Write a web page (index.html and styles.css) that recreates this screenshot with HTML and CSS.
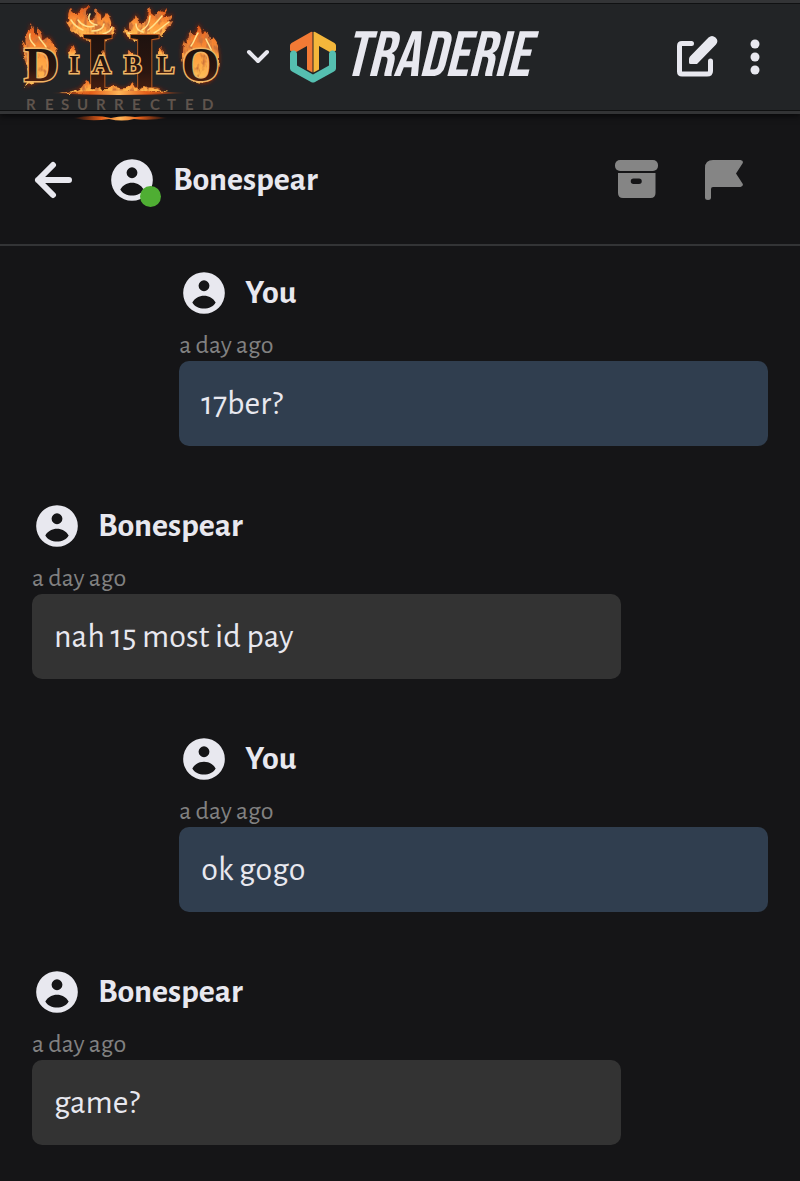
FILE: index.html
```html
<!DOCTYPE html>
<html lang="en">
<head>
    <meta charset="UTF-8">
    <meta name="viewport" content="width=device-width, initial-scale=1.0">
    <title>Bonespear - Traderie</title>
    <link rel="stylesheet" href="styles.css">
</head>
<body>
    <svg class="defs" width="0" height="0" aria-hidden="true">
        <symbol id="avatar" viewBox="0 0 24 24">
            <path fill-rule="evenodd" d="M12 2a10 10 0 1 0 0 20 10 10 0 0 0 0-20zm0 3.900a2.600 2.600 0 1 1 0 5.200 2.600 2.600 0 0 1 0-5.200zM6.400 16.500C7.600 14.400 9.700 13.300 12 13.300s4.400 1.100 5.600 3.200C16.500 18.500 14.400 19.400 12 19.400s-4.500-.9-5.600-2.900z"/>
        </symbol>
    </svg>

    <header class="topbar">
        <button class="game-btn" aria-label="Choose game">
            <svg class="game-logo" viewBox="0 0 240 130" role="img" aria-label="Diablo II Resurrected">
                <defs>
                    <filter id="glow" x="-20%" y="-20%" width="140%" height="140%"><feGaussianBlur stdDeviation="2"/></filter>
                    <filter id="soft" x="-10%" y="-10%" width="120%" height="120%"><feGaussianBlur stdDeviation="0.5"/></filter>
                    <!-- rough edges and dark streaks inside the flames -->
                    <filter id="burn" x="-10%" y="-10%" width="120%" height="120%">
                        <feTurbulence type="fractalNoise" baseFrequency="0.16 0.09" numOctaves="3" seed="4" result="noise"/>
                        <feDisplacementMap in="SourceGraphic" in2="noise" scale="6" xChannelSelector="R" yChannelSelector="G" result="shape"/>
                        <feColorMatrix in="noise" values="0 0 0 0 0.62  0 0 0 0 0.17  0 0 0 0 0.04  0 0 5 0 -2.4" result="streaks"/>
                        <feComposite in="streaks" in2="shape" operator="atop" result="fire"/>
                        <feGaussianBlur in="fire" stdDeviation="0.5"/>
                    </filter>
                    <linearGradient id="fire" x1="0" y1="0" x2="0" y2="1">
                        <stop offset="0" stop-color="#e0561a"/>
                        <stop offset="0.5" stop-color="#ff9a3c"/>
                        <stop offset="1" stop-color="#ffc65a"/>
                    </linearGradient>
                    <linearGradient id="stone" x1="0" y1="0" x2="0" y2="1">
                        <stop offset="0" stop-color="#17100e"/>
                        <stop offset="0.6" stop-color="#2b1610"/>
                        <stop offset="1" stop-color="#6b2910"/>
                    </linearGradient>
                    <linearGradient id="ember">
                        <stop offset="0" stop-color="#c8420e" stop-opacity="0"/>
                        <stop offset="0.3" stop-color="#e5601a"/>
                        <stop offset="0.5" stop-color="#ffb456"/>
                        <stop offset="0.7" stop-color="#e5601a"/>
                        <stop offset="1" stop-color="#c8420e" stop-opacity="0"/>
                    </linearGradient>
                    <g id="horn-flames">
                        <path d="M82 38C75 33 69 30 66 20c2 2 3 2 4 1-3-5-2-10 2-13-1 4 1 6 4 6 2 0 3-5 9-7 3-1 5-1 6 0-5 1-7 6-3 10 2 3 5 3 7 0 2-3 1-5-1-7 6 1 8 5 7 10 3-1 5-3 4-8 5 5 7 9 6 15 2 0 3 0 4-2 2 7-2 12-7 15-8 2-18 2-26-2z"/>
                        <path d="M128 38c-3-3-5-7-3-11 1 3 3 4 5 3-2-4-1-7 2-9 3-3 4-5 3-8 4 4 4 8 4 10 4 1 7 0 8-4 1-4-1-8 4-12-1 5 1 8 4 9 4-1 6-6 12-7-3 3-3 6-2 7 3 0 5 0 8-3-1 5-3 7-5 8 2 1 3 1 5 0-2 6-7 8-9 10-2 4-4 6-9 7-9 3-19 3-27 0z"/>
                    </g>
                    <g id="letter-flames">
                        <path d="M25 56c-3-5-4-10-1-15 0 3 1 4 3 4-1-5-1-8 1-12 2-3 3-6 2-10 4 4 3 9 6 12 2 2 3-2 1-6 5 3 6 7 6 11 3 0 4-2 5-4 5 5 9 12 8 23-1 10-6 17-14 21-7 3-12 4-18 8 4-5 5-9 5-16z"/>
                        <path d="M187 73c-6-10-6-23-3-33 1 3 2 4 4 3-1-5 0-9 4-12-1 4 1 5 2 4 3-4 4-7 4-12 3 4 3 8 4 11 2 0 2-1 2-4 5 5 5 8 5 12 2-1 3-2 3-4 5 5 7 12 7 20 0 13-5 25-16 25-7 0-12-4-16-10z"/>
                        <path d="M69 55c-2-4 0-8 4-11 0 4 3 5 3 9-1 2-4 3-7 2z"/>
                        <path d="M159 55c0-4 2-5 2-8 3 3 3 4 3 6 1 2-3 4-5 2z"/>
                    </g>
                    <g id="base-flames">
                        <path d="M100 57c2-1 3-3 2-6 3 2 4 4 3 7z"/>
                        <path d="M126 57c2-3 2-4 2-6 4 2 5 3 6 6z"/>
                        <path d="M60 93c8-1 16-2 21-5 2-3 4-5 5-8 3 4 3 6 4 9 4 1 8-1 10-2 3 3 6 2 7 2 3-1 4-3 6-5 3 4 7 5 13 4 4-1 5-3 6-6 3 3 3 4 4 6 5 0 6-1 8-2 3 2 6 1 8 2 2 1 5 1 7 0 0 2 4 3 10 4z"/>
                    </g>
                </defs>
                <g fill="#9b2508" filter="url(#glow)">
                    <use href="#horn-flames"/>
                    <use href="#letter-flames"/>
                    <use href="#base-flames"/>
                </g>
                <g fill="url(#fire)" filter="url(#burn)">
                    <use href="#horn-flames"/>
                    <use href="#letter-flames"/>
                </g>
                <g class="flame-lines" filter="url(#soft)">
                    <path d="M71 20c3 5 7 8 12 10M78 20c4 6 11 8 16 6M90 14c-3 5 0 10 7 11M104 24c-1 5-6 7-12 7M112 27c-1 4-5 6-9 7"/>
                    <path d="M128 33c4 2 8 3 12 2M136 24c0 5 3 7 7 8M150 16c0 7-4 12-8 14M162 16c-5 6-8 10-14 14M169 22c-6 4-8 7-15 11"/>
                    <path d="M30 34c-2 6 3 9 5 12M39 37c2 5 5 6 7 10M198 33c-4 6-3 8-7 13M206 39c2 5 5 8 6 14"/>
                </g>
                <text class="logo-pillar" x="81 128" y="92">II</text>
                <use href="#base-flames" fill="url(#fire)" filter="url(#burn)"/>
                <path d="M50 93q68-5 138 0q-70 4-138 0z" fill="url(#ember)"/>
                <path d="M73 118q22-4 38 0q12-3 24-1q18-2 33 1q-20 3-34 1q-12 3-25 0q-18 3-36-1z" fill="url(#ember)"/>
                <text class="logo-large" x="24" y="81">D</text>
                <text class="logo-small" x="69 92 124 157" y="73">IABL</text>
                <text class="logo-large" x="182" y="81">O</text>
                <text class="logo-sub" x="26 45 61 77 96 114 132 150 167 185 202" y="110">RESURRECTED</text>
            </svg>
            <svg class="chevron" viewBox="0 0 24 16" aria-hidden="true"><path d="M3 3l9 9 9-9"/></svg>
        </button>

        <a class="brand" href="#">
            <svg class="brand-mark" viewBox="0 0 46 52" aria-hidden="true">
                <path fill="#f27a35" d="M22.500 1v40.500L17 38.500V15L4.500 22 0 19.500v-5Q0 13 1.500 12L20 1.500Q21.500.5 22.500 1z"/>
                <path fill="#f4b73b" d="M23.500 1v40.500L29 38.500V15l12.500 7 4.500-2.500v-5q0-1.500-1.500-2.500L26 1.500Q24.500.5 23.500 1z"/>
                <path fill="#55bfb0" d="M0 23q0-3 3-3.500t4 3v12l16 9 16-9v-12q1-3.500 4-3t3 3.500v14.500q0 2-2 3L25 51q-2 1-4 0L2 40.500q-2-1-2-3z"/>
            </svg>
            <span class="brand-name">TRADERIE</span>
        </a>

        <div class="topbar-actions">
            <button class="icon-btn" aria-label="Create listing">
                <svg class="icon-edit" viewBox="0 0 42 42" aria-hidden="true">
                    <path class="edit-frame" d="M15.500 7.500H6Q3.500 7.500 3.500 10v25.500Q3.500 38 6 38h25q3.500 0 3.500-3V25"/>
                    <path d="M14 20.500L32.500 1.500q3.500-3 7 0t.5 7L21 28h-6.500q-1.500 0-1.500-1.500V23q0-1.500 1-2.500z"/>
                </svg>
            </button>
            <button class="icon-btn" aria-label="More options">
                <svg class="icon-more" viewBox="0 0 10 36" aria-hidden="true"><circle cx="5" cy="5" r="4.500"/><circle cx="5" cy="18" r="4.500"/><circle cx="5" cy="31" r="4.500"/></svg>
            </button>
        </div>
    </header>

    <section class="chat-header">
        <button class="icon-btn" aria-label="Back">
            <svg class="icon-back" viewBox="0 0 38 38" aria-hidden="true"><path d="M19 4L4 19l15 15M4 19h31"/></svg>
        </button>
        <div class="chat-avatar">
            <svg class="avatar"><use href="#avatar"/></svg>
            <span class="online"></span>
        </div>
        <h1 class="user-name">Bonespear</h1>
        <div class="chat-actions">
            <button class="icon-btn" aria-label="Archive">
                <svg class="icon-archive" viewBox="0 0 43 40" aria-hidden="true">
                    <rect x="0" y="0" width="43" height="11" rx="5"/>
                    <path fill-rule="evenodd" d="M3 13h37.500v20q0 5-5 5H8q-5 0-5-5zm15.500 5.500a2.750 2.750 0 0 0 0 5.500h5.500a2.750 2.750 0 0 0 0-5.500z"/>
                </svg>
            </button>
            <button class="icon-btn" aria-label="Report">
                <svg class="icon-flag" viewBox="0 0 38 40" aria-hidden="true"><path d="M0 8q0-8 8-8h27.500q3.500.5 2 3.500l-6.500 10 6.500 10q1.500 2.500-2 3.500H8q-2 0-2 2v8.500Q6 40 3 40t-3-2.500z"/></svg>
            </button>
        </div>
    </section>

    <main class="messages">
        <article class="message mine">
            <div class="message-head"><svg class="avatar"><use href="#avatar"/></svg><h2 class="user-name">You</h2></div>
            <p class="time">a day ago</p>
            <p class="bubble">17ber?</p>
        </article>
        <article class="message">
            <div class="message-head"><svg class="avatar"><use href="#avatar"/></svg><h2 class="user-name">Bonespear</h2></div>
            <p class="time">a day ago</p>
            <p class="bubble">nah 15 most id pay</p>
        </article>
        <article class="message mine">
            <div class="message-head"><svg class="avatar"><use href="#avatar"/></svg><h2 class="user-name">You</h2></div>
            <p class="time">a day ago</p>
            <p class="bubble">ok gogo</p>
        </article>
        <article class="message">
            <div class="message-head"><svg class="avatar"><use href="#avatar"/></svg><h2 class="user-name">Bonespear</h2></div>
            <p class="time">a day ago</p>
            <p class="bubble">game?</p>
        </article>
    </main>
</body>
</html>
```

FILE: styles.css
```css
* {
    box-sizing: border-box;
}

body {
    margin: 0;
    background: #151517;
    color: #e8e8ef;
    font-family: "Alegreya Sans", Lato, sans-serif;
}

h1, h2, p {
    margin: 0;
}

button {
    padding: 0;
    border: 0;
    background: none;
    color: inherit;
    font: inherit;
    cursor: pointer;
}

svg {
    display: block;
    flex: none;
    fill: currentColor;
}

.defs {
    position: absolute;
}

/* top bar */
.topbar {
    display: flex;
    align-items: center;
    height: 114px;
    padding-right: 40px;
    background: #222426;
    border-top: 3px solid #333436;
    border-bottom: 3px solid #333436;
    box-shadow: inset 0 1px #101112, inset 0 -1px #101112, 0 2px 6px #08080a;
}

.game-btn {
    display: flex;
    align-items: center;
}

.game-logo {
    width: 240px;
    height: 130px;
    margin: -3px 0 -19px;
}

.chevron {
    width: 24px;
    height: 16px;
    margin-left: 6px;
    fill: none;
    stroke: currentColor;
    stroke-width: 4;
    stroke-linecap: round;
    stroke-linejoin: round;
}

.flame-lines {
    fill: none;
    stroke: #ffe08a;
    stroke-width: 1.5;
    stroke-linecap: round;
}

.logo-pillar, .logo-large, .logo-small {
    font-family: "Liberation Serif", serif;
    font-weight: bold;
    fill: url(#stone);
    stroke: #f0b565;
    paint-order: stroke;
}

.logo-pillar {
    font-size: 86px;
    stroke: #b55a20;
    stroke-width: 2px;
}

.logo-large {
    font-size: 48px;
    stroke-width: 3px;
}

.logo-small {
    font-size: 26px;
    stroke-width: 3px;
}

.logo-sub {
    font-family: Lato, sans-serif;
    font-size: 15px;
    font-weight: bold;
    fill: #5f544d;
}

.brand {
    display: flex;
    align-items: center;
    gap: 8px;
    margin-left: 20px;
    color: inherit;
    text-decoration: none;
}

.brand-mark {
    width: 46px;
    height: 52px;
}

.brand-name {
    font-family: "Bebas Neue", "Roboto Condensed", "Liberation Sans Narrow", sans-serif;
    font-size: 64px;
    font-style: italic;
    line-height: 60px;
}

.topbar-actions {
    display: flex;
    align-items: center;
    gap: 32px;
    margin-left: auto;
}

.icon-edit {
    width: 42px;
    height: 42px;
}

.edit-frame {
    fill: none;
    stroke: currentColor;
    stroke-width: 5;
    stroke-linecap: round;
}

.icon-more {
    width: 10px;
    height: 36px;
}

/* conversation header */
.chat-header {
    display: flex;
    align-items: center;
    height: 132px;
    padding: 2px 57px 0 34px;
    border-bottom: 2px solid #333436;
}

.icon-back {
    width: 38px;
    height: 38px;
    fill: none;
    stroke: currentColor;
    stroke-width: 6;
    stroke-linecap: round;
    stroke-linejoin: round;
}

.chat-avatar {
    position: relative;
    margin: 0 16px 0 35px;
}

.avatar {
    width: 50px;
    height: 50px;
}

.online {
    position: absolute;
    right: -4px;
    bottom: -2px;
    width: 21px;
    height: 21px;
    border-radius: 50%;
    background: #4fae33;
}

.user-name {
    font-size: 34px;
    font-weight: bold;
    line-height: 40px;
}

.chat-actions {
    display: flex;
    align-items: center;
    gap: 47px;
    margin-left: auto;
    color: #858585;
}

.icon-archive {
    width: 43px;
    height: 40px;
}

.icon-flag {
    width: 38px;
    height: 40px;
}

/* messages */
.messages {
    display: flex;
    flex-direction: column;
    gap: 55px;
    padding: 22px 32px 36px;
}

.message {
    width: 80%;
}

.mine {
    align-self: flex-end;
}

.message-head {
    display: flex;
    align-items: center;
    gap: 16px;
    margin-bottom: 11px;
}

.time {
    color: #818181;
    font-size: 26px;
    line-height: 32px;
}

.bubble {
    padding: 23px 22px 21px;
    border-radius: 10px;
    background: #333333;
    font-size: 34px;
    line-height: 41px;
}

.mine .bubble {
    background: #303e4f;
}
```
